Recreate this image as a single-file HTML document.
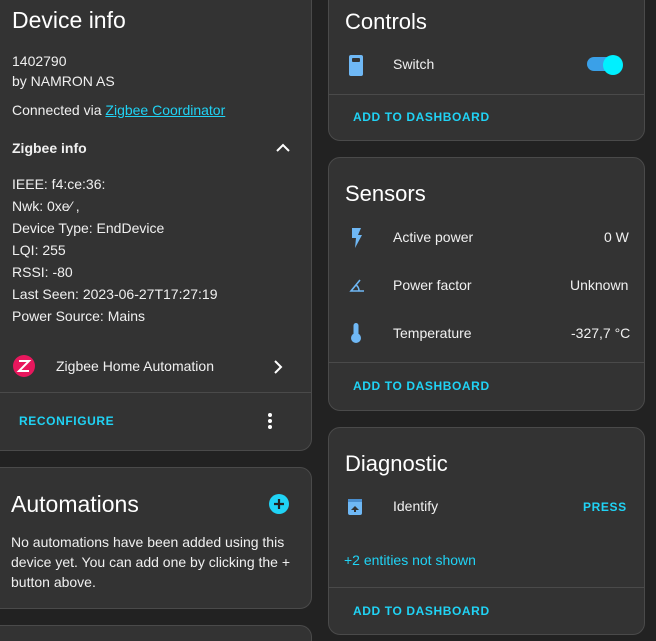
<!DOCTYPE html>
<html style="height:641px;overflow:hidden"><head><style>
*{box-sizing:border-box;margin:0;padding:0}
body{width:656px;height:641px;background:#222;font-family:"Liberation Sans",sans-serif;color:#e8e8e8;position:relative;overflow:hidden}
.card{position:absolute;background:#333;border:1px solid #4a4a4a;border-radius:12px}
.t{position:absolute;font-size:22px;color:#fff}
.s{position:absolute;font-size:14px;color:#f0f0f0}
.b{position:absolute;font-size:12px;font-weight:bold;letter-spacing:0.6px;color:#20d3f5}
.hr{position:absolute;left:0;right:0;height:1px;background:#4a4a4a}
</style></head><body>
<div class="card" style="left:-12px;top:-20px;width:324px;height:471px">
<div class="hr" style="top:411px"></div></div>
<div class="t" style="left:12px;top:7px;font-size:23px">Device info</div>
<div class="s" style="left:12px;top:53px">1402790</div>
<div class="s" style="left:12px;top:73px">by NAMRON AS</div>
<div class="s" style="left:12px;top:102px">Connected via <span style="color:#20d3f5;text-decoration:underline">Zigbee Coordinator</span></div>
<div class="s" style="left:12px;top:140px;font-weight:bold">Zigbee info</div>
<svg style="position:absolute;left:275px;top:142px" width="16" height="12"><path d="M2 9 L8 3 L14 9" stroke="#fff" stroke-width="2" fill="none"/></svg>
<div class="s" style="left:12px;top:173px;line-height:22px">IEEE: f4:ce:36:<br>Nwk: 0xe&#x2044; ,<br>Device Type: EndDevice<br>LQI: 255<br>RSSI: -80<br>Last Seen: 2023-06-27T17:27:19<br>Power Source: Mains</div>
<svg style="position:absolute;left:12px;top:354px" width="24" height="24"><circle cx="12" cy="12" r="11" fill="#e8175d"/><path d="M7 7H17L7 17H17" stroke="#fff" stroke-width="2" fill="none"/></svg>
<div class="s" style="left:56px;top:358px">Zigbee Home Automation</div>
<svg style="position:absolute;left:272px;top:359px" width="12" height="16"><path d="M3 2L9 8L3 14" stroke="#fff" stroke-width="2" fill="none"/></svg>
<div class="b" style="left:19px;top:414px">RECONFIGURE</div>
<div style="position:absolute;left:268px;top:413px;width:5px;line-height:0">
<div style="width:4px;height:4px;border-radius:50%;background:#fff;margin-bottom:2px"></div><div style="width:4px;height:4px;border-radius:50%;background:#fff;margin-bottom:2px"></div><div style="width:4px;height:4px;border-radius:50%;background:#fff"></div></div>

<div class="card" style="left:-12px;top:467px;width:324px;height:142px"></div>
<div class="t" style="left:11px;top:491px;font-size:23px">Automations</div>
<svg style="position:absolute;left:268px;top:493px" width="22" height="22"><circle cx="11" cy="11" r="10" fill="#20d3f5"/><path d="M11 6V16M6 11H16" stroke="#222" stroke-width="2.2"/></svg>
<div class="s" style="left:11px;top:532px;line-height:20px;width:290px">No automations have been added using this device yet. You can add one by clicking the + button above.</div>
<div style="position:absolute;left:-12px;top:625px;width:324px;height:16px;background:#333;border:1px solid #4a4a4a;border-bottom:none;border-radius:12px 12px 0 0"></div>

<div class="card" style="left:328px;top:-20px;width:317px;height:161px">
<div class="hr" style="top:113px"></div></div>
<div class="t" style="left:345px;top:9px">Controls</div>
<div style="position:absolute;left:349px;top:55px;width:14px;height:21px;background:#6fb8f5;border-radius:2px"><div style="margin:3px 3px;width:8px;height:4px;background:#333;border-radius:1px"></div></div>
<div class="s" style="left:393px;top:56px">Switch</div>
<div style="position:absolute;left:587px;top:57px;width:34px;height:14px;border-radius:7px;background:#3aa0e8"></div>
<div style="position:absolute;left:603px;top:55px;width:20px;height:20px;border-radius:50%;background:#00f0ff"></div>
<div class="b" style="left:353px;top:110px">ADD TO DASHBOARD</div>

<div class="card" style="left:328px;top:157px;width:317px;height:254px">
<div class="hr" style="top:204px"></div></div>
<div class="t" style="left:345px;top:181px">Sensors</div>
<svg style="position:absolute;left:350px;top:227px" width="14" height="22"><path d="M2 1H11L8 8H12L5 21L6 11H2Z" fill="#6fb8f5"/></svg>
<div class="s" style="left:393px;top:229px">Active power</div>
<div class="s" style="left:604px;top:229px">0 W</div>
<svg style="position:absolute;left:348px;top:278px" width="18" height="16"><path d="M12 2L3 13H16M8 7Q11 9 11 13" stroke="#6fb8f5" stroke-width="1.6" fill="none"/></svg>
<div class="s" style="left:393px;top:277px">Power factor</div>
<div class="s" style="left:570px;top:277px">Unknown</div>
<svg style="position:absolute;left:350px;top:322px" width="12" height="22"><rect x="3.5" y="1" width="5" height="14" rx="2.5" fill="#6fb8f5"/><circle cx="6" cy="16" r="5" fill="#6fb8f5"/></svg>
<div class="s" style="left:393px;top:325px">Temperature</div>
<div class="s" style="left:571px;top:325px">-327,7 °C</div>
<div class="b" style="left:353px;top:379px">ADD TO DASHBOARD</div>

<div class="card" style="left:328px;top:427px;width:317px;height:208px">
<div class="hr" style="top:159px"></div></div>
<div class="t" style="left:345px;top:451px">Diagnostic</div>
<svg style="position:absolute;left:347px;top:498px" width="16" height="18"><rect x="1" y="1" width="14" height="16" rx="2" fill="#6fb8f5"/><rect x="1" y="1" width="14" height="3" fill="#4a8fd0"/><path d="M4 12L8 8L12 12Z" fill="#333"/><rect x="7" y="11" width="2" height="3" fill="#333"/></svg>
<div class="s" style="left:393px;top:498px">Identify</div>
<div class="b" style="left:583px;top:500px">PRESS</div>
<div class="s" style="left:344px;top:552px;color:#20d3f5">+2 entities not shown</div>
<div class="b" style="left:353px;top:604px">ADD TO DASHBOARD</div>
</body></html>
